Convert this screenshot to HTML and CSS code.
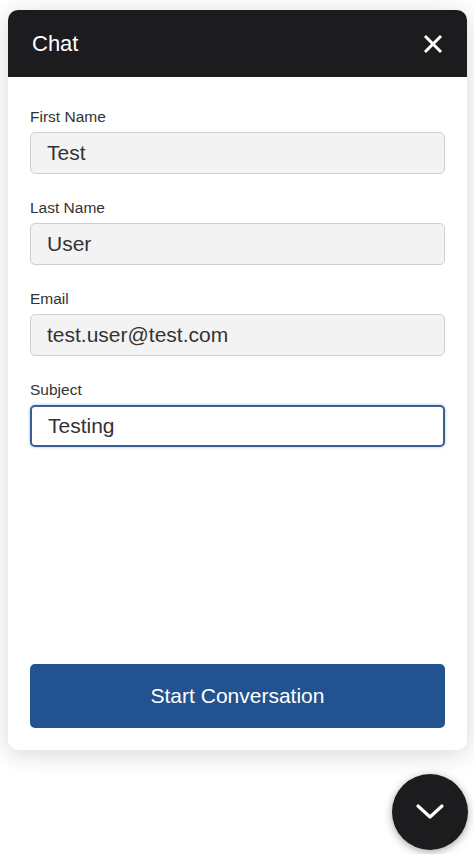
FILE: index.html
```html
<!DOCTYPE html>
<html lang="en">
<head>
    <meta charset="UTF-8">
    <meta name="viewport" content="width=device-width, initial-scale=1.0">
    <title>Chat</title>
    <link rel="stylesheet" href="styles.css">
</head>
<body>

    <div class="chat-panel">
        <div class="chat-header">
            <span class="chat-title">Chat</span>
            <button class="close-btn" aria-label="Close">
                <svg width="20" height="20" viewBox="0 0 20 20">
                    <path d="M2 2 L18 18 M18 2 L2 18" stroke="#fff" stroke-width="3" stroke-linecap="butt"/>
                </svg>
            </button>
        </div>

        <form class="chat-form">
            <div class="field">
                <label for="first">First Name</label>
                <input id="first" class="text-input" type="text" value="Test" readonly>
            </div>
            <div class="field">
                <label for="last">Last Name</label>
                <input id="last" class="text-input" type="text" value="User" readonly>
            </div>
            <div class="field">
                <label for="email">Email</label>
                <input id="email" class="text-input" type="text" value="test.user@test.com" readonly>
            </div>
            <div class="field">
                <label for="subject">Subject</label>
                <input id="subject" class="text-input active" type="text" value="Testing">
            </div>

            <button type="button" class="start-btn">Start Conversation</button>
        </form>
    </div>

    <button class="toggle-btn" aria-label="Minimize chat">
        <svg width="30" height="18" viewBox="0 0 30 18">
            <path d="M3 3 L15 14 L27 3" fill="none" stroke="#fff" stroke-width="3.2" stroke-linecap="round" stroke-linejoin="round"/>
        </svg>
    </button>

</body>
</html>
```

FILE: styles.css
```css
body {
    margin: 0;
    font-family: "Liberation Sans", Arial, sans-serif;
    background-color: #fff;
    height: 854px;
    overflow: hidden;
}
.chat-panel {
    margin: 10px 7px 0 8px;
    height: 740px;
    display: flex;
    flex-direction: column;
    background-color: #fff;
    border-radius: 10px;
    box-shadow: 0 4px 24px rgba(0, 0, 0, 0.16);
    overflow: hidden;
}
.chat-header {
    height: 67px;
    background-color: #1c1c1e;
    display: flex;
    align-items: center;
    justify-content: space-between;
    padding: 0 24px;
}
.chat-title {
    color: #fff;
    font-size: 22px;
}
.close-btn {
    background: none;
    border: none;
    padding: 0;
    display: flex;
    cursor: pointer;
}
.chat-form {
    flex: 1;
    display: flex;
    flex-direction: column;
    padding: 31px 22px 22px;
}
.field {
    display: flex;
    flex-direction: column;
    margin-bottom: 25px;
}
.field label {
    font-size: 15.5px;
    line-height: 18px;
    color: #333;
    margin-bottom: 6px;
}
.text-input {
    box-sizing: border-box;
    height: 42px;
    padding: 0 16px;
    font-family: "Liberation Sans", Arial, sans-serif;
    font-size: 21px;
    color: #333;
    background-color: #f3f3f3;
    border: 1px solid #cfcfcf;
    border-radius: 5px;
    outline: none;
}
.text-input.active {
    background-color: #fff;
    border: 2px solid #3a5f95;
    box-shadow: 0 0 3px rgba(52, 89, 143, 0.45);
}
.start-btn {
    margin-top: auto;
    height: 64px;
    background-color: #22528f;
    color: #fff;
    border: none;
    border-radius: 5px;
    font-family: "Liberation Sans", Arial, sans-serif;
    font-size: 21px;
    cursor: pointer;
}
.toggle-btn {
    position: absolute;
    left: 392px;
    top: 774px;
    width: 76px;
    height: 76px;
    border-radius: 50%;
    border: none;
    background-color: #1c1c1e;
    box-shadow: 0 2px 8px rgba(0, 0, 0, 0.35);
    display: flex;
    align-items: center;
    justify-content: center;
    padding: 0;
    cursor: pointer;
}
```
